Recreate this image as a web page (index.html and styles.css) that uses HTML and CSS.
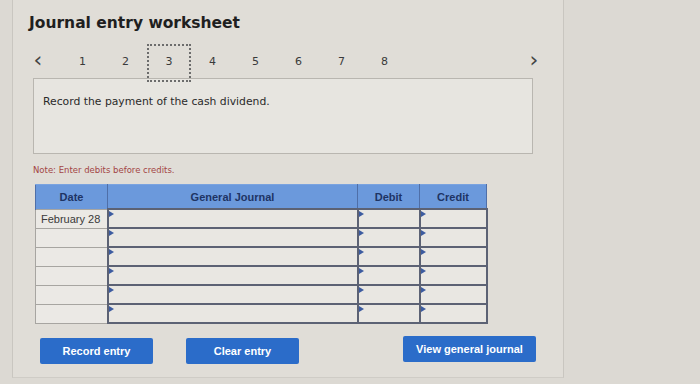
FILE: index.html
```html
<!DOCTYPE html>
<html lang="en">
<head>
  <meta charset="UTF-8">
  <title>Journal entry worksheet</title>
  <link rel="stylesheet" href="styles.css">
</head>
<body>
  <div class="sheet">
    <h1 class="title">Journal entry worksheet</h1>

    <div class="steps">
      <span class="arrow">&lsaquo;</span>
      <ol class="step-list">
        <li>1</li>
        <li>2</li>
        <li class="current">3</li>
        <li>4</li>
        <li>5</li>
        <li>6</li>
        <li>7</li>
        <li>8</li>
      </ol>
      <span class="arrow next">&rsaquo;</span>
    </div>

    <div class="prompt">Record the payment of the cash dividend.</div>

    <p class="note">Note: Enter debits before credits.</p>

    <table class="journal">
      <thead>
        <tr>
          <th class="col-date">Date</th>
          <th class="col-account">General Journal</th>
          <th class="col-debit">Debit</th>
          <th class="col-credit">Credit</th>
        </tr>
      </thead>
      <tbody>
        <tr><td class="date">February 28</td><td class="field"></td><td class="field"></td><td class="field"></td></tr>
        <tr><td class="date"></td><td class="field"></td><td class="field"></td><td class="field"></td></tr>
        <tr><td class="date"></td><td class="field"></td><td class="field"></td><td class="field"></td></tr>
        <tr><td class="date"></td><td class="field"></td><td class="field"></td><td class="field"></td></tr>
        <tr><td class="date"></td><td class="field"></td><td class="field"></td><td class="field"></td></tr>
        <tr><td class="date"></td><td class="field"></td><td class="field"></td><td class="field"></td></tr>
      </tbody>
    </table>

    <div class="actions">
      <button class="btn">Record entry</button>
      <button class="btn">Clear entry</button>
      <button class="btn btn-view">View general journal</button>
    </div>
  </div>
</body>
</html>
```

FILE: styles.css
```css
body {
  margin: 0;
  background-color: #dcd9d3;
  font-family: "DejaVu Sans", Verdana, sans-serif;
  color: #2b2b2b;
  height: 384px;
  overflow: hidden;
}

.sheet {
  width: 552px;
  height: 378px;
  margin-left: 12px;
  background-color: #e0ddd7;
  border-left: 1px solid #c9c6c0;
  border-right: 1px solid #c9c6c0;
  border-bottom: 1px solid #cfccc6;
  box-sizing: border-box;
}

.title {
  margin: 0;
  padding: 13px 0 0 16px;
  font-size: 15.5px;
  font-weight: bold;
  line-height: 20px;
  color: #1f1f1f;
}

/* step navigation */
.steps {
  display: flex;
  align-items: center;
  height: 38px;
  margin-top: 11px;
  padding-left: 19px;
}

.arrow {
  width: 12px;
  font-size: 22px;
  line-height: 20px;
  color: #444;
  text-align: center;
  padding-bottom: 6px;
}

.arrow.next {
  margin-left: 122px;
}

.step-list {
  display: flex;
  margin: 0 0 0 17px;
  padding: 0;
  list-style: none;
}

.step-list li {
  width: 43px;
  height: 38px;
  line-height: 36px;
  text-align: center;
  font-size: 11px;
  color: #3a3a3a;
  box-sizing: border-box;
}

.step-list li.current {
  border: 2px dotted #6c6c6c;
  width: 44px;
  line-height: 32px;
  position: relative;
  z-index: 1;
}

/* question prompt */
.prompt {
  margin: -4px 0 0 20px;
  width: 500px;
  height: 76px;
  box-sizing: border-box;
  border: 1px solid #b9b6b0;
  background-color: #e7e5e0;
  padding: 16px 0 0 9px;
  font-size: 10.8px;
  color: #2a2a2a;
}

.note {
  margin: 11px 0 0 20px;
  font-size: 8.5px;
  color: #a34545;
}

/* journal table */
.journal {
  margin: 9px 0 0 22px;
  border-collapse: collapse;
  font-family: "Liberation Sans", Arial, sans-serif;
  font-size: 11px;
  table-layout: fixed;
  width: 447px;
}

.journal th {
  height: 23px;
  padding: 0;
  background-color: #6b99dc;
  color: #1e3464;
  font-weight: bold;
  border-left: 1px solid #4f6fa8;
  border-right: 1px solid #4f6fa8;
  border-top: 1px solid #7aa3e0;
}

.col-date { width: 71px; }
.col-account { width: 249px; }
.col-debit { width: 61px; }
.col-credit { width: 66px; }

.journal td {
  height: 17px;
  padding: 0 0 0 5px;
  background-color: #e9e7e2;
}

.journal td.date {
  border: 1px solid #a7a5a1;
  background-color: #ebe9e5;
  color: #3a3a3a;
}

.journal td.field {
  position: relative;
  border: 2px solid #5c6274;
}

.journal td.field::before {
  content: "";
  position: absolute;
  top: 1px;
  left: 0;
  border-left: 5px solid #3d5ca0;
  border-top: 3px solid transparent;
  border-bottom: 3px solid transparent;
}

/* buttons */
.actions {
  display: flex;
  align-items: flex-start;
  margin: 14px 0 0 27px;
}

.btn {
  height: 26px;
  width: 113px;
  border: none;
  border-radius: 2px;
  background-color: #2b6cc9;
  color: #ffffff;
  font-family: "Liberation Sans", Arial, sans-serif;
  font-size: 11px;
  font-weight: bold;
  cursor: pointer;
}

.btn + .btn {
  margin-left: 33px;
}

.btn.btn-view {
  margin-left: 104px;
  width: 133px;
  margin-top: -2px;
}
```
